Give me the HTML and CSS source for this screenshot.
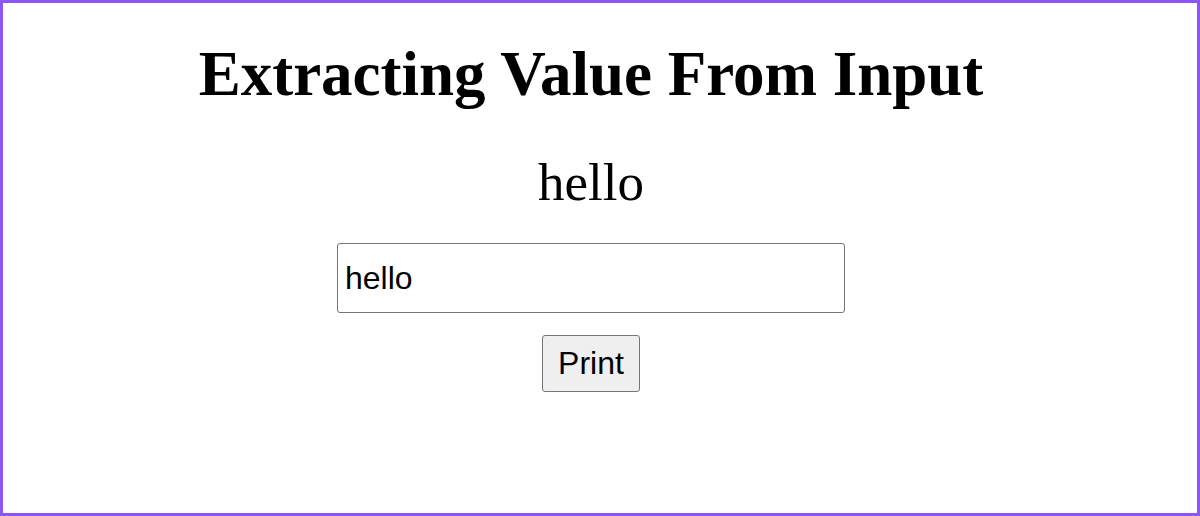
FILE: index.html
```html
<!DOCTYPE html>
<html>
<head>
<meta charset="utf-8">
<link rel="stylesheet" href="styles.css">
</head>
<body>
<div class="frame">
  <h1 class="title">Extracting Value From Input</h1>
  <p class="output">hello</p>
  <input class="field" type="text" value="hello">
  <button class="btn">Print</button>
</div>
</body>
</html>
```
FILE: styles.css
```css
html, body {
  margin: 0;
  padding: 0;
  background: #ffffff;
}
.frame {
  box-sizing: border-box;
  width: 1200px;
  height: 516px;
  border: 3px solid #8c55f8;
  display: flex;
  flex-direction: column;
  align-items: center;
  padding-top: 36px;
  padding-right: 18px;
  font-family: "Liberation Serif", "Times New Roman", serif;
}
.title {
  margin: 0;
  font-size: 63px;
  line-height: 71px;
  font-weight: bold;
  color: #000;
}
.output {
  margin: 41px 0 0 0;
  font-size: 53px;
  line-height: 62px;
  color: #000;
}
.field {
  box-sizing: border-box;
  margin-top: 30px;
  width: 508px;
  height: 70px;
  border: 1px solid #767676;
  border-radius: 3px;
  padding: 0 7px;
  font-family: "Liberation Sans", Arial, sans-serif;
  font-size: 32px;
  color: #000;
  background: #fff;
  outline: none;
}
.btn {
  box-sizing: border-box;
  margin-top: 22px;
  width: 98px;
  height: 57px;
  border: 1px solid #767676;
  border-radius: 3px;
  background: #efefef;
  font-family: "Liberation Sans", Arial, sans-serif;
  font-size: 32px;
  color: #000;
  padding: 0;
}
```
